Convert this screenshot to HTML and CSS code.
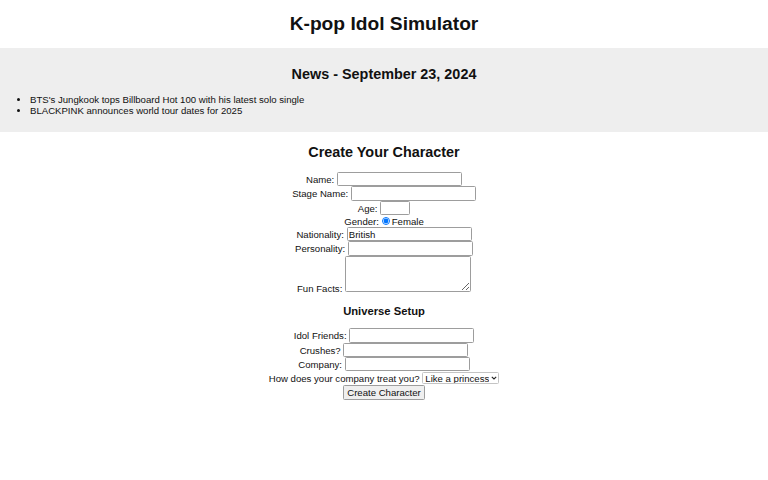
FILE: index.html
```html
<!DOCTYPE html>
<html lang="en">
<head>
    <meta charset="UTF-8">
    <meta name="viewport" content="width=device-width, initial-scale=1.0">
    <title>K-pop Idol Simulator</title>
    <link rel="stylesheet" href="styles.css">
</head>
<body>
    <h1>K-pop Idol Simulator</h1>

    <section class="news">
        <h2>News - September 23, 2024</h2>
        <ul>
            <li>BTS's Jungkook tops Billboard Hot 100 with his latest solo single</li>
            <li>BLACKPINK announces world tour dates for 2025</li>
        </ul>
    </section>

    <form class="character" onsubmit="return false">
        <h2>Create Your Character</h2>
        <div class="row"><label for="name">Name:</label> <input type="text" id="name" class="field"></div>
        <div class="row"><label for="stage">Stage Name:</label> <input type="text" id="stage" class="field"></div>
        <div class="row"><label for="age">Age:</label> <input type="number" id="age" class="field age"></div>
        <div class="row">Gender:<input type="radio" id="female" name="gender" class="radio" checked><label for="female">Female</label></div>
        <div class="row"><label for="nationality">Nationality:</label> <input type="text" id="nationality" class="field" value="British"></div>
        <div class="row"><label for="personality">Personality:</label> <input type="text" id="personality" class="field"></div>
        <div class="row"><label for="facts">Fun Facts:</label> <textarea id="facts" class="facts"></textarea></div>

        <h3>Universe Setup</h3>
        <div class="row"><label for="friends">Idol Friends:</label> <input type="text" id="friends" class="field"></div>
        <div class="row"><label for="crushes">Crushes?</label> <input type="text" id="crushes" class="field"></div>
        <div class="row"><label for="company">Company:</label> <input type="text" id="company" class="field"></div>
        <div class="row treat">
            <label for="treatment">How does your company treat you?</label>
            <span class="select-wrap">
                <select id="treatment" class="choice">
                    <option>Like a princess</option>
                    <option>Like a trainee</option>
                    <option>Badly</option>
                </select>
                <svg class="chevron" width="6" height="4" viewBox="0 0 6 4"><path d="M0.8 0.8 L3 3 L5.2 0.8" fill="none" stroke="#222" stroke-width="1.1"/></svg>
            </span>
        </div>
        <div class="row"><button type="submit" class="create">Create Character</button></div>
    </form>
</body>
</html>
```

FILE: styles.css
```css
body {
    margin: 0;
    font-family: "Liberation Sans", Arial, sans-serif;
    font-size: 9.6px;
    color: #111;
    background-color: #fff;
}
h1 {
    font-size: 19.2px;
    margin: 12.86px 0;
    text-align: center;
}
h2 {
    font-size: 14.4px;
    margin: 11.95px 0;
    text-align: center;
}
h3 {
    font-size: 11.23px;
    margin: 11.23px 0;
    text-align: center;
}
.news {
    background-color: #eee;
    padding: 6px 6px 7px;
}
.news ul {
    margin: 9.6px 0;
    padding-left: 24px;
}
.character {
    text-align: center;
}
input, select, textarea, button {
    font: inherit;
    color: inherit;
}
.field {
    box-sizing: border-box;
    width: 125px;
    height: 14.4px;
    margin: 0;
    padding: 0.6px 1.2px;
    border: 1px solid #9d9d9d;
    border-radius: 1.5px;
}
.field.age {
    width: 30px;
    -moz-appearance: textfield;
}
.field.age::-webkit-inner-spin-button {
    -webkit-appearance: none;
}
.radio {
    width: 8px;
    height: 8px;
    margin: 1.8px 1.8px 0 3px;
}
.facts {
    box-sizing: border-box;
    width: 126px;
    height: 36px;
    margin: 0;
    padding: 1.2px;
    border: 1px solid #9d9d9d;
    border-radius: 1.5px;
}
.treat {
    padding: 0.5px 0 1px;
}
.select-wrap {
    position: relative;
    display: inline-block;
}
.choice {
    -webkit-appearance: none;
    appearance: none;
    box-sizing: border-box;
    height: 12.5px;
    margin: 0;
    padding: 0 9px 0 2px;
    border: 1px solid #c4c4c4;
    border-radius: 1.5px;
    background-color: #fff;
}
.chevron {
    position: absolute;
    right: 2px;
    top: 4.5px;
    pointer-events: none;
}
.create {
    margin: 0;
    padding: 0.6px 3.6px;
    border: 1px solid #9d9d9d;
    border-radius: 1.5px;
    background-color: #efefef;
    cursor: pointer;
}
.create:hover {
    background-color: #e5e5e5;
}
```
